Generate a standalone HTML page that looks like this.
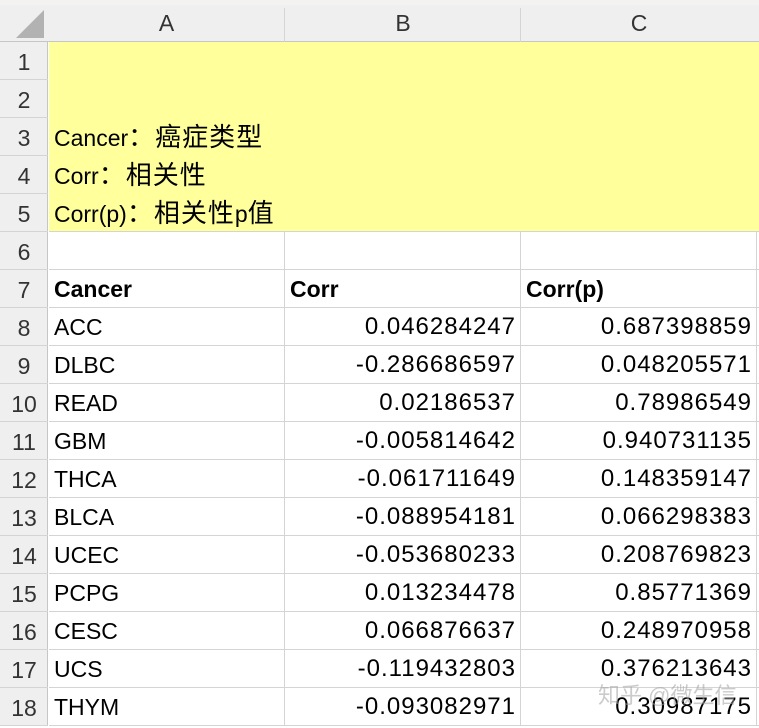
<!DOCTYPE html>
<html><head><meta charset="utf-8"><style>
body{margin:0;width:759px;height:725px;overflow:hidden;background:#fff;font-family:"Liberation Sans","Noto Sans CJK SC",sans-serif;position:relative}
.a{position:absolute;box-sizing:border-box}
.t{position:absolute;font-size:23px;color:#000;white-space:nowrap;line-height:38px}
.n{font-size:24px;letter-spacing:1px;margin-right:-1px}
.c{font-size:26px;letter-spacing:1px}
.rh{position:absolute;left:0;width:48px;text-align:center;font-size:23px;color:#333;line-height:40px}
.ch{position:absolute;top:5px;height:37px;line-height:37px;text-align:center;font-size:23px;color:#333}
</style></head><body>
<div class="a" style="left:0;top:0;width:759px;height:5px;background:#f4f2f0"></div>
<div class="a" style="left:0;top:5px;width:759px;height:37px;background:#efefef;border-bottom:1px solid #c6c6c6"></div>
<div class="a" style="left:0;top:42px;width:48px;height:683px;background:#efefef;border-right:1px solid #c6c6c6"></div>
<svg class="a" style="left:14px;top:8px" width="32" height="32"><polygon points="30,2 30,30 2,30" fill="#b2b2b2"/></svg>
<div class="a" style="left:284px;top:8px;width:1px;height:34px;background:#d4d4d4"></div>
<div class="a" style="left:520px;top:8px;width:1px;height:34px;background:#d4d4d4"></div>
<div class="ch" style="left:48px;width:237px">A</div>
<div class="ch" style="left:285px;width:236px">B</div>
<div class="ch" style="left:521px;width:236px">C</div>
<div class="a" style="left:49px;top:42px;width:710px;height:190px;background:#ffff9c"></div>
<div id="g"></div>
<script>
var rows=[["","",""],["","",""],["Cancer<span class=c>：癌症类型</span>","",""],["Corr<span class=c>：相关性</span>","",""],["Corr(p)<span class=c>：相关性</span>p<span class=c>值</span>","",""],["","",""],
["<b>Cancer</b>","<b>Corr</b>","<b>Corr(p)</b>"],
["ACC","0.046284247","0.687398859"],["DLBC","-0.286686597","0.048205571"],["READ","0.02186537","0.78986549"],
["GBM","-0.005814642","0.940731135"],["THCA","-0.061711649","0.148359147"],["BLCA","-0.088954181","0.066298383"],
["UCEC","-0.053680233","0.208769823"],["PCPG","0.013234478","0.85771369"],["CESC","0.066876637","0.248970958"],
["UCS","-0.119432803","0.376213643"],["THYM","-0.093082971","0.30987175"]];
var h="";
for(var i=0;i<rows.length;i++){var y=42+38*i;
h+='<div class="rh" style="top:'+y+'px">'+(i+1)+'</div>';
h+='<div class="a" style="left:0;top:'+(y+37)+'px;width:48px;height:1px;background:#d4d4d4"></div>';
if(i>=4)h+='<div class="a" style="left:49px;top:'+(y+37)+'px;width:710px;height:1px;background:#d4d4d4"></div>';
var r=rows[i];
h+='<div class="t" style="left:54px;top:'+y+'px">'+r[0]+'</div>';
if(i==6){h+='<div class="t" style="left:290px;top:'+y+'px">'+r[1]+'</div><div class="t" style="left:526px;top:'+y+'px">'+r[2]+'</div>';}
else{h+='<div class="t n" style="right:244px;top:'+y+'px">'+r[1]+'</div><div class="t n" style="right:8px;top:'+y+'px">'+r[2]+'</div>';}
}
h+='<div class="a" style="left:284px;top:232px;width:1px;height:493px;background:#d4d4d4"></div>';
h+='<div class="a" style="left:520px;top:232px;width:1px;height:493px;background:#d4d4d4"></div>';
h+='<div class="a" style="left:756px;top:232px;width:1px;height:493px;background:#d4d4d4"></div>';
document.getElementById("g").innerHTML=h;
</script>
<div class="a" style="left:598px;top:678px;font-size:22px;color:rgba(160,160,160,0.55);white-space:nowrap">知乎 @微生信</div>
</body></html>
